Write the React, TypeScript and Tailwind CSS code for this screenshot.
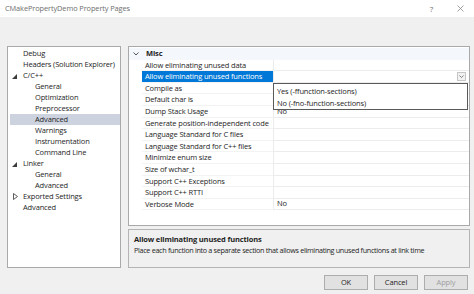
import React from 'react';

type TreeItem = { label: string; level: number; toggle?: 'open' | 'closed'; selected?: boolean };

const treeItems: TreeItem[] = [
  { label: 'Debug', level: 0 },
  { label: 'Headers (Solution Explorer)', level: 0 },
  { label: 'C/C++', level: 0, toggle: 'open' },
  { label: 'General', level: 1 },
  { label: 'Optimization', level: 1 },
  { label: 'Preprocessor', level: 1 },
  { label: 'Advanced', level: 1, selected: true },
  { label: 'Warnings', level: 1 },
  { label: 'Instrumentation', level: 1 },
  { label: 'Command Line', level: 1 },
  { label: 'Linker', level: 0, toggle: 'open' },
  { label: 'General', level: 1 },
  { label: 'Advanced', level: 1 },
  { label: 'Exported Settings', level: 0, toggle: 'closed' },
  { label: 'Advanced', level: 0 },
];

const properties: { name: string; value?: string; selected?: boolean }[] = [
  { name: 'Allow eliminating unused data' },
  { name: 'Allow eliminating unused functions', selected: true },
  { name: 'Compile as' },
  { name: 'Default char is' },
  { name: 'Dump Stack Usage', value: 'No' },
  { name: 'Generate position-independent code' },
  { name: 'Language Standard for C files' },
  { name: 'Language Standard for C++ files' },
  { name: 'Minimize enum size' },
  { name: 'Size of wchar_t' },
  { name: 'Support C++ Exceptions' },
  { name: 'Support C++ RTTI' },
  { name: 'Verbose Mode', value: 'No' },
];

function Toggle({ kind }: { kind?: 'open' | 'closed' }) {
  if (kind === 'open') {
    return (
      <svg width="5" height="5" viewBox="0 0 5 5" className="absolute left-[2px] top-[4px]">
        <path d="M5 0 L5 5 L0 5 Z" fill="#3c3c3c" />
      </svg>
    );
  }
  if (kind === 'closed') {
    return (
      <svg width="5" height="7" viewBox="0 0 5 7" className="absolute left-[3px] top-[2px]">
        <path d="M0.5 0.5 L4.5 3.5 L0.5 6.5 Z" fill="none" stroke="#4a4a4a" strokeWidth="0.9" />
      </svg>
    );
  }
  return null;
}

function Button({ label, disabled }: { label: string; disabled?: boolean }) {
  return (
    <div
      className={`w-[44px] h-[15px] flex items-center justify-center border border-[#adadad] bg-[#e1e1e1] ${
        disabled ? 'text-[#a0a0a0]' : 'text-[#1e1e1e]'
      }`}
    >
      {label}
    </div>
  );
}

export default function App() {
  return (
    <div
      className="w-[474px] h-[294px] bg-[#f0f0f0] flex flex-col overflow-hidden text-[7.5px] tracking-[-0.15px] text-[#1e1e1e]"
      style={{ fontFamily: '"Open Sans", "Noto Sans", sans-serif' }}
    >
      {/* title bar */}
      <div className="h-[17px] bg-white flex items-center pl-[5px] pr-[10px] text-[#6e6e6e]">
        <span className="text-[7.4px] tracking-[-0.1px]">CMakePropertyDemo Property Pages</span>
        <span className="ml-auto text-[8px] mr-[24px]">?</span>
        <svg width="7" height="7" viewBox="0 0 7 7">
          <path d="M0.5 0.5 L6.5 6.5 M6.5 0.5 L0.5 6.5" stroke="#8a8a8a" strokeWidth="0.8" />
        </svg>
      </div>

      <div className="flex gap-[7px] pl-[7px] mt-[29px]">
        {/* left tree */}
        <div className="w-[114px] h-[222px] bg-white border border-[#a9a9a9] pt-[1px]">
          {treeItems.map((t, i) => (
            <div
              key={i}
              className={`relative ml-[2px] h-[11px] leading-[11px] ${t.selected ? 'bg-[#cdd2df]' : ''}`}
              style={{ paddingLeft: t.level === 0 ? 13 : 25 }}
            >
              <Toggle kind={t.toggle} />
              {t.label}
            </div>
          ))}
        </div>

        {/* right side */}
        <div className="w-[342px] flex flex-col">
          <div className="relative h-[180px] bg-white border border-[#a9a9a9] pt-[1px]">
            {/* category header */}
            <div className="h-[11.6px] flex items-center bg-[#f4f7fc]">
              <svg width="6" height="4" viewBox="0 0 6 4" className="ml-[4px] mr-[7px]">
                <path d="M0.5 0.5 L3 3 L5.5 0.5" fill="none" stroke="#444" strokeWidth="0.9" />
              </svg>
              <span className="font-bold">Misc</span>
            </div>
            {properties.map((p, i) => (
              <div key={i} className="h-[11.6px] flex">
                <div className="w-[13px] shrink-0" />
                <div
                  className={`w-[131px] shrink-0 pl-[3px] leading-[11.6px] whitespace-nowrap overflow-hidden border-b border-[#f3f3f3] ${
                    p.selected ? 'bg-[#0078d7] text-white border-[#0078d7]' : ''
                  }`}
                >
                  {p.name}
                </div>
                <div className="flex-1 pl-[3px] leading-[11.6px] border-l border-b border-[#ececec] flex items-center">
                  {p.value && <span className={i === 4 ? 'mt-[2px]' : ''}>{p.value}</span>}
                  {p.selected && (
                    <div className="ml-auto mr-[3px] w-[9px] h-[9px] border border-[#c5c5c5] bg-[#f2f2f2] flex items-center justify-center">
                      <svg width="5" height="3" viewBox="0 0 5 3">
                        <path d="M0.5 0.5 L2.5 2.5 L4.5 0.5" fill="none" stroke="#666" strokeWidth="0.8" />
                      </svg>
                    </div>
                  )}
                </div>
              </div>
            ))}

            {/* open dropdown list */}
            <div className="absolute left-[144px] top-[36px] w-[195px] h-[27px] bg-white border border-[#5a5a5a] pl-[3px] pt-[1px]">
              <div className="h-[12px] leading-[12px]">Yes (-ffunction-sections)</div>
              <div className="h-[12px] leading-[12px]">No (-fno-function-sections)</div>
            </div>
          </div>

          {/* description */}
          <div className="mt-[3px] h-[39px] border border-[#b4b4b4] bg-[#f0f0f0] px-[5px] pt-[4px]">
            <div className="font-bold leading-[11px]">Allow eliminating unused functions</div>
            <div className="leading-[11px] text-[7.2px] tracking-[-0.3px]">
              Place each function into a separate section that allows eliminating unused functions at link time
            </div>
          </div>
        </div>
      </div>

      {/* buttons */}
      <div className="flex justify-end gap-[6px] pr-[6px] mt-[7px]">
        <Button label="OK" />
        <Button label="Cancel" />
        <Button label="Apply" disabled />
      </div>
    </div>
  );
}
